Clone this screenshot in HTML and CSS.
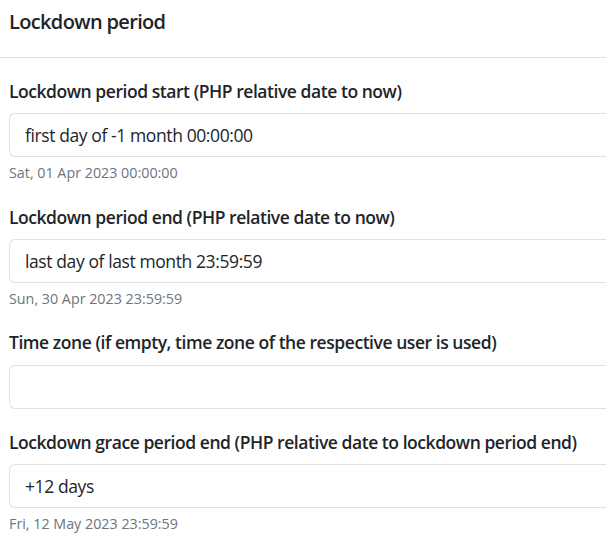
FILE: index.html
```html
<!DOCTYPE html>
<html lang="en">
<head>
    <meta charset="UTF-8">
    <meta name="viewport" content="width=device-width, initial-scale=1.0">
    <title>Lockdown period</title>
    <link rel="stylesheet" href="styles.css">
</head>
<body>
    <div class="card">
        <div class="card-header">
            <h5 class="card-title">Lockdown period</h5>
        </div>
        <div class="card-body">
            <div class="form-group">
                <label class="form-label" for="lockdownStart">Lockdown period start (PHP relative date to now)</label>
                <input class="form-control" id="lockdownStart" type="text" value="first day of -1 month 00:00:00">
                <div class="form-text">Sat, 01 Apr 2023 00:00:00</div>
            </div>
            <div class="form-group">
                <label class="form-label" for="lockdownEnd">Lockdown period end (PHP relative date to now)</label>
                <input class="form-control" id="lockdownEnd" type="text" value="last day of last month 23:59:59">
                <div class="form-text">Sun, 30 Apr 2023 23:59:59</div>
            </div>
            <div class="form-group">
                <label class="form-label" for="timeZone">Time zone (if empty, time zone of the respective user is used)</label>
                <input class="form-control" id="timeZone" type="text" value="">
            </div>
            <div class="form-group">
                <label class="form-label" for="graceEnd">Lockdown grace period end (PHP relative date to lockdown period end)</label>
                <input class="form-control" id="graceEnd" type="text" value="+12 days">
                <div class="form-text">Fri, 12 May 2023 23:59:59</div>
            </div>
        </div>
    </div>
</body>
</html>
```

FILE: styles.css
```css
html, body {
    margin: 0;
    background: #fff;
}
body {
    font-family: "Open Sans", "Noto Sans", sans-serif;
    color: #212529;
}
.card-header {
    padding: 7px 9px 20px;
    border-bottom: 1px solid #dee2e6;
}
.card-title {
    margin: 0;
    font-size: 20px;
    font-weight: 600;
    line-height: 30px;
    letter-spacing: -0.65px;
}
.card-body {
    padding: 20px 0 0 9px;
}
.form-group {
    display: flex;
    flex-direction: column;
    margin-bottom: 20px;
}
.form-label {
    font-size: 17.5px;
    font-weight: 600;
    line-height: 1.5;
    letter-spacing: -0.45px;
    margin-bottom: 9px;
}
.form-control {
    box-sizing: border-box;
    width: 100%;
    height: 44px;
    padding: 8px 15px;
    font-family: inherit;
    font-size: 17.5px;
    line-height: 1.5;
    letter-spacing: -0.4px;
    color: #212529;
    border: 1px solid #dee2e6;
    border-right: none;
    border-radius: 6px 0 0 6px;
    background: #fff;
    outline: none;
}
.form-text {
    margin-top: 5px;
    font-size: 14.3px;
    line-height: 1.5;
    color: #6c757d;
}
```
